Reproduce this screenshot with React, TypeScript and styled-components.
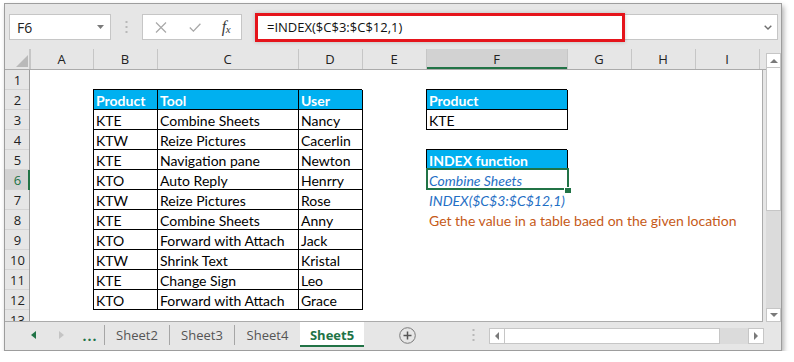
import React from "react";
import styled, { createGlobalStyle, css } from "styled-components";

const GREEN = "#217346";
const UI_FONT = `"Open Sans", "Noto Sans", sans-serif`;
const CELL_FONT = `Lato, "Liberation Sans", sans-serif`;

const GlobalStyle = createGlobalStyle`
  html, body {
    margin: 0;
    background: #fff;
  }
  body {
    font-family: ${UI_FONT};
  }
`;

const COLUMNS = [
  { name: "A", width: 63 },
  { name: "B", width: 64 },
  { name: "C", width: 141 },
  { name: "D", width: 64 },
  { name: "E", width: 64 },
  { name: "F", width: 141 },
  { name: "G", width: 64 },
  { name: "H", width: 64 },
  { name: "I", width: 64 },
  { name: "J", width: 64 },
];

const TABLE = [
  ["KTE", "Combine Sheets", "Nancy"],
  ["KTW", "Reize Pictures", "Cacerlin"],
  ["KTE", "Navigation pane", "Newton"],
  ["KTO", "Auto Reply", "Henrry"],
  ["KTW", "Reize Pictures", "Rose"],
  ["KTE", "Combine Sheets", "Anny"],
  ["KTO", "Forward with Attach", "Jack"],
  ["KTW", "Shrink Text", "Kristal"],
  ["KTE", "Change Sign", "Leo"],
  ["KTO", "Forward with Attach", "Grace"],
];

type Kind = "head" | "data" | "result" | "formula" | "note";

interface CellData {
  text: string;
  kind: Kind;
  top?: boolean;
  right?: boolean;
  selected?: boolean;
}

const cells: Record<string, CellData> = {};
["Product", "Tool", "User"].forEach((text, i) => {
  cells[`${"BCD"[i]}2`] = { text, kind: "head", top: true, right: i === 2 };
});
TABLE.forEach((row, r) =>
  row.forEach((text, i) => {
    cells[`${"BCD"[i]}${r + 3}`] = { text, kind: "data", right: i === 2 };
  })
);
cells.F2 = { text: "Product", kind: "head", top: true, right: true };
cells.F3 = { text: "KTE", kind: "data", right: true };
cells.F5 = { text: "INDEX function", kind: "head", top: true, right: true };
cells.F6 = { text: "Combine Sheets", kind: "result", right: true, selected: true };
cells.F7 = { text: "INDEX($C$3:$C$12,1)", kind: "formula" };
cells.F8 = { text: "Get the value in a table baed on the given location", kind: "note" };

const ROW_COUNT = 13;
const ACTIVE_ROW = 6;
const ACTIVE_COL = "F";

const boxed = (k?: Kind) => k === "head" || k === "data" || k === "result";

const borderShadow = (top?: boolean, right?: boolean) =>
  [
    "inset 1px 0 0 #000",
    "inset 0 -1px 0 #000",
    top ? "0 -1px 0 #000" : "",
    right ? "1px 0 0 #000" : "",
  ]
    .filter(Boolean)
    .join(", ");

export default function App(): React.ReactElement {
  return (
    <>
      <GlobalStyle />
      <Window>
        <FormulaBar>
          <NameBox>
            F6
            <svg width="7" height="4" viewBox="0 0 7 4">
              <path d="M0 0h7L3.5 4z" fill="#7a7a7a" />
            </svg>
          </NameBox>
          <Grip>
            <svg width="3" height="12" viewBox="0 0 3 12">
              <rect x="0.5" y="0" width="2" height="2" fill="#b8b8b8" />
              <rect x="0.5" y="5" width="2" height="2" fill="#b8b8b8" />
              <rect x="0.5" y="10" width="2" height="2" fill="#b8b8b8" />
            </svg>
          </Grip>
          <FxBox>
            <FxSlot $w={35}>
              <svg width="12" height="11" viewBox="0 0 12 11">
                <path d="M1 0.5l10 10M11 0.5l-10 10" stroke="#a8a8a8" strokeWidth="1.2" fill="none" />
              </svg>
            </FxSlot>
            <FxSlot $w={33}>
              <svg width="12" height="9" viewBox="0 0 12 9">
                <path d="M0.8 4.5l3.6 3.6L11.4 0.8" stroke="#a8a8a8" strokeWidth="1.3" fill="none" />
              </svg>
            </FxSlot>
            <FxSlot $w={30}>
              <Fx>
                f<small>x</small>
              </Fx>
            </FxSlot>
          </FxBox>
          <FormulaInput>
            <Highlight />
            <FormulaText>=INDEX($C$3:$C$12,1)</FormulaText>
            <svg width="8" height="5" viewBox="0 0 8 5">
              <path d="M0.7 0.7L4 4l3.3-3.3" stroke="#6e6e6e" strokeWidth="1.4" fill="none" />
            </svg>
          </FormulaInput>
        </FormulaBar>

        <SheetArea>
          <Grid>
            <HeaderRow>
              <Corner>
                <svg width="12" height="12" viewBox="0 0 12 12">
                  <path d="M12 0v12H0z" fill="#b9b9b9" />
                </svg>
              </Corner>
              {COLUMNS.map((c) => (
                <ColHead key={c.name} $w={c.width} $active={c.name === ACTIVE_COL}>
                  {c.name}
                </ColHead>
              ))}
            </HeaderRow>
            <Body>
              {Array.from({ length: ROW_COUNT }, (_, i) => i + 1).map((r) => (
                <Row key={r}>
                  <RowHead $active={r === ACTIVE_ROW}>{r}</RowHead>
                  {COLUMNS.map((c) => {
                    const d = cells[`${c.name}${r}`];
                    return (
                      <Cell
                        key={c.name}
                        $w={c.width}
                        $kind={d?.kind}
                        $top={d?.top}
                        $right={d?.right}
                        $selected={d?.selected}
                      >
                        {d?.text}
                        {d?.selected && <Selection />}
                      </Cell>
                    );
                  })}
                </Row>
              ))}
            </Body>
          </Grid>
          <VScroll>
            <ScrollButton $h={15}>
              <svg width="8" height="4" viewBox="0 0 8 4">
                <path d="M0 4h8L4 0z" fill="#7a7a7a" />
              </svg>
            </ScrollButton>
            <VThumb />
            <Track />
            <ScrollButton $h={14}>
              <svg width="8" height="4" viewBox="0 0 8 4">
                <path d="M0 0h8L4 4z" fill="#7a7a7a" />
              </svg>
            </ScrollButton>
          </VScroll>
        </SheetArea>

        <TabBar>
          <Nav>
            <NavItem $w={28}>
              <svg width="5" height="8" viewBox="0 0 5 8">
                <path d="M5 0v8L0 4z" fill={GREEN} />
              </svg>
            </NavItem>
            <NavItem $w={29}>
              <svg width="5" height="8" viewBox="0 0 5 8">
                <path d="M0 0v8l5-4z" fill="#c4c4c4" />
              </svg>
            </NavItem>
            <NavItem $w={28}>
              <More>...</More>
            </NavItem>
          </Nav>
          <TabSep />
          <Tab $w={64}>Sheet2</Tab>
          <TabSep />
          <Tab $w={64}>Sheet3</Tab>
          <TabSep />
          <Tab $w={65}>Sheet4</Tab>
          <Tab $w={64} $active>
            Sheet5
          </Tab>
          <AddSheet>
            <svg width="17" height="17" viewBox="0 0 17 17">
              <circle cx="8.5" cy="8.5" r="7.8" stroke="#7a7a7a" strokeWidth="1" fill="none" />
              <path d="M8.5 4.5v8M4.5 8.5h8" stroke="#555" strokeWidth="1.5" />
            </svg>
          </AddSheet>
          <SplitGrip>
            <svg width="3" height="12" viewBox="0 0 3 12">
              <rect x="0.5" y="0" width="2" height="2" fill="#b8b8b8" />
              <rect x="0.5" y="5" width="2" height="2" fill="#b8b8b8" />
              <rect x="0.5" y="10" width="2" height="2" fill="#b8b8b8" />
            </svg>
          </SplitGrip>
          <HScroll>
            <HButton>
              <svg width="4" height="8" viewBox="0 0 4 8">
                <path d="M4 0v8L0 4z" fill="#7a7a7a" />
              </svg>
            </HButton>
            <HThumb />
            <Track />
            <HButton>
              <svg width="4" height="8" viewBox="0 0 4 8">
                <path d="M0 0v8l4-4z" fill="#7a7a7a" />
              </svg>
            </HButton>
          </HScroll>
        </TabBar>
      </Window>
    </>
  );
}

const Window = styled.div`
  margin: 3px 0 0 4px;
  width: 778px;
  height: 348px;
  box-sizing: border-box;
  border: 1px solid #9d9d9d;
  background: #e6e6e6;
  box-shadow: 2px 3px 5px rgba(0, 0, 0, 0.3);
  display: flex;
  flex-direction: column;
  overflow: hidden;
`;

const FormulaBar = styled.div`
  display: flex;
  align-items: flex-start;
  height: 45px;
  flex: none;
  padding: 10px 3px 0 4px;
  box-sizing: border-box;
`;

const InputBox = css`
  height: 26px;
  box-sizing: border-box;
  border: 1px solid #c6c6c6;
  background: #fff;
  display: flex;
  align-items: center;
`;

const NameBox = styled.div`
  ${InputBox};
  width: 102px;
  justify-content: space-between;
  padding: 0 6px 0 7px;
  font-size: 14px;
  color: #222;
`;

const Grip = styled.div`
  width: 31px;
  height: 26px;
  display: flex;
  align-items: center;
  justify-content: center;
`;

const FxBox = styled.div`
  ${InputBox};
  width: 100px;
`;

const FxSlot = styled.div<{ $w: number }>`
  width: ${(p) => p.$w}px;
  display: flex;
  justify-content: center;
  align-items: center;
`;

const Fx = styled.span`
  font-family: "Liberation Serif", serif;
  font-style: italic;
  font-size: 16px;
  color: #3a3a3a;
  letter-spacing: -0.5px;

  small {
    font-size: 11px;
    position: relative;
    top: 1px;
  }
`;

const FormulaInput = styled.div`
  ${InputBox};
  position: relative;
  flex: 1;
  margin-left: 13px;
  padding: 0 5px 0 11px;
  justify-content: space-between;
`;

const Highlight = styled.div`
  position: absolute;
  left: -1px;
  top: -2px;
  width: 370px;
  height: 29px;
  box-sizing: border-box;
  border: 3px solid #e5141b;
  box-shadow: 0 0 4px rgba(0, 0, 0, 0.2);
  pointer-events: none;
`;

const FormulaText = styled.span`
  font-size: 13px;
  color: #111;
`;

const SheetArea = styled.div`
  display: flex;
  height: 273px;
  flex: none;
`;

const Grid = styled.div`
  width: 761px;
  display: flex;
  flex-direction: column;
  overflow: hidden;
`;

const HeaderRow = styled.div`
  display: flex;
  height: 21px;
  flex: none;
  box-sizing: border-box;
  border-bottom: 1px solid #ababab;
`;

const Corner = styled.div`
  flex: none;
  width: 25px;
  height: 20px;
  display: flex;
  align-items: flex-end;
  justify-content: flex-end;
  padding: 0 2px 2px 0;
  box-sizing: border-box;
  box-shadow: inset -1px 0 0 #c6c6c6;
`;

const ColHead = styled.div<{ $w: number; $active?: boolean }>`
  flex: none;
  width: ${(p) => p.$w}px;
  height: 20px;
  display: flex;
  align-items: center;
  justify-content: center;
  font-size: 13px;
  color: #222;
  background: ${(p) => (p.$active ? "#d2d2d2" : "transparent")};
  box-shadow: inset 1px 0 0 #c6c6c6
    ${(p) => (p.$active ? `, inset 0 -2px 0 ${GREEN}` : "")};
`;

const Body = styled.div`
  width: 758px;
  height: 252px;
  box-sizing: border-box;
  border-right: 1px solid #ababab;
  border-bottom: 1px solid #ababab;
  background: #fff;
  overflow: hidden;
`;

const Row = styled.div`
  display: flex;
  height: 20px;
`;

const RowHead = styled.div<{ $active?: boolean }>`
  flex: none;
  width: 25px;
  height: 20px;
  display: flex;
  align-items: center;
  justify-content: center;
  font-size: 13px;
  color: ${(p) => (p.$active ? GREEN : "#222")};
  background: ${(p) => (p.$active ? "#d2d2d2" : "#e6e6e6")};
  box-shadow: ${(p) => (p.$active ? `inset -2px 0 0 ${GREEN}` : "inset -1px 0 0 #9e9e9e")},
    inset 0 -1px 0 #d4d4d4;
`;

const Cell = styled.div<{
  $w: number;
  $kind?: Kind;
  $top?: boolean;
  $right?: boolean;
  $selected?: boolean;
}>`
  flex: none;
  width: ${(p) => p.$w}px;
  height: 20px;
  padding: 0 3px;
  box-sizing: border-box;
  display: flex;
  align-items: flex-end;
  font-family: ${CELL_FONT};
  font-size: 14px;
  line-height: 18px;
  white-space: nowrap;
  color: #000;
  ${(p) => boxed(p.$kind) && css`box-shadow: ${borderShadow(p.$top, p.$right)};`}
  ${(p) =>
    p.$kind === "head" &&
    css`
      background: #00b0f0;
      color: #fff;
      font-weight: 700;
    `}
  ${(p) =>
    (p.$kind === "result" || p.$kind === "formula") &&
    css`
      color: #1f6fc5;
      font-style: italic;
    `}
  ${(p) => p.$kind === "note" && css`color: #c65a18;`}
  ${(p) => p.$selected && css`position: relative;`}
`;

const Selection = styled.span`
  position: absolute;
  top: -2px;
  left: 0;
  right: -2px;
  bottom: 0;
  border: 2px solid ${GREEN};
  pointer-events: none;

  &::after {
    content: "";
    position: absolute;
    right: -4px;
    bottom: -5px;
    width: 6px;
    height: 5px;
    background: ${GREEN};
    box-shadow: 0 0 0 1px #fff;
  }
`;

const VScroll = styled.div`
  width: 15px;
  margin-top: 4px;
  display: flex;
  flex-direction: column;
`;

const ScrollButton = styled.div<{ $h: number }>`
  flex: none;
  height: ${(p) => p.$h}px;
  box-sizing: border-box;
  border: 1px solid #c6c6c6;
  background: #fff;
  display: flex;
  align-items: center;
  justify-content: center;
`;

const VThumb = styled.div`
  flex: none;
  height: 143px;
  box-sizing: border-box;
  border: 1px solid #c6c6c6;
  border-top: none;
  background: #fff;
`;

const Track = styled.div`
  flex: 1;
  background: #dbdbdb;
`;

const TabBar = styled.div`
  flex: 1;
  display: flex;
  align-items: flex-start;
`;

const Nav = styled.div`
  width: 99px;
  height: 25px;
  padding-left: 14px;
  box-sizing: border-box;
  display: flex;
`;

const NavItem = styled.div<{ $w: number }>`
  width: ${(p) => p.$w}px;
  height: 100%;
  display: flex;
  align-items: center;
  justify-content: center;
`;

const More = styled.span`
  font-size: 14px;
  font-weight: 700;
  color: ${GREEN};
  letter-spacing: 1px;
  margin-top: 2px;
`;

const TabSep = styled.div`
  width: 1px;
  height: 20px;
  margin-top: 3px;
  background: #a6a6a6;
`;

const Tab = styled.div<{ $w: number; $active?: boolean }>`
  width: ${(p) => p.$w}px;
  height: 25px;
  box-sizing: border-box;
  display: flex;
  align-items: center;
  justify-content: center;
  font-size: 13px;
  color: #555;
  ${(p) =>
    p.$active &&
    css`
      background: #fff;
      border-bottom: 2px solid ${GREEN};
      color: ${GREEN};
      font-weight: 700;
      padding-top: 2px;
    `}
`;

const AddSheet = styled.div`
  margin: 5px 0 0 35px;
  width: 17px;
  height: 17px;
  display: flex;
`;

const SplitGrip = styled.div`
  margin: 7px 0 0 52px;
  width: 11px;
  display: flex;
  justify-content: center;
`;

const HScroll = styled.div`
  margin: 6px 0 0 10px;
  width: 275px;
  height: 16px;
  display: flex;
`;

const HButton = styled.div`
  flex: none;
  width: 16px;
  box-sizing: border-box;
  border: 1px solid #c6c6c6;
  background: #fff;
  display: flex;
  align-items: center;
  justify-content: center;
`;

const HThumb = styled.div`
  flex: none;
  width: 215px;
  box-sizing: border-box;
  border: 1px solid #c6c6c6;
  border-left: none;
  background: #fff;
`;
